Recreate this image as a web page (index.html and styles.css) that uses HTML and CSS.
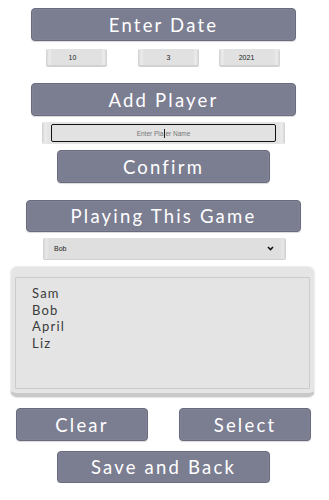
FILE: index.html
```html
<!DOCTYPE html>
<html>
<head>
<meta charset="utf-8">
<link rel="stylesheet" href="styles.css">
</head>
<body>
<div class="page">
  <div class="btn btn-wide first">Enter Date</div>
  <div class="date-row">
    <div class="date d1">10</div>
    <div class="date d2">3</div>
    <div class="date d3">2021</div>
  </div>
  <div class="btn btn-wide add">Add Player</div>
  <div class="input-wrap">
    <div class="name-input"><span class="ph">Enter Pla</span><span class="caret"></span><span class="ph">er Name</span></div>
  </div>
  <div class="btn btn-mid confirm">Confirm</div>
  <div class="btn btn-play">Playing This Game</div>
  <div class="select">
    <span>Bob</span>
    <svg class="chev" width="7" height="5" viewBox="0 0 7 5"><path d="M1 1 L3.5 3.5 L6 1" fill="none" stroke="#111" stroke-width="1.6"/></svg>
  </div>
  <div class="panel">
    <div class="panel-inner">
      <div class="item">Sam</div>
      <div class="item">Bob</div>
      <div class="item">April</div>
      <div class="item">Liz</div>
    </div>
  </div>
  <div class="pair">
    <div class="btn btn-half">Clear</div>
    <div class="btn btn-half">Select</div>
  </div>
  <div class="btn btn-mid save">Save and Back</div>
</div>
</body>
</html>
```
FILE: styles.css
```css
* { box-sizing: border-box; }
html, body { margin: 0; padding: 0; background: #fff; }
.page {
  width: 329px;
  padding-top: 8px;
  display: flex;
  flex-direction: column;
  align-items: flex-start;
}
.btn {
  background: #7b7d91;
  border: 1px solid #696b7d;
  border-radius: 4px;
  box-shadow: 0 1px 1px rgba(0,0,0,0.15), inset 0 0 2px rgba(255,255,255,0.15);
  color: #fff;
  font-family: "Lato", sans-serif;
  font-size: 18.5px;
  letter-spacing: 2.2px;
  display: flex;
  align-items: center;
  justify-content: center;
  height: 33px;
}
.btn-wide { width: 265px; margin-left: 31px; }
.first { margin-bottom: 8px; }
.add { margin-bottom: 6px; }
.btn-mid { width: 213px; margin-left: 57px; }
.confirm { margin-bottom: 17px; }
.btn-play { width: 275px; margin-left: 26px; height: 32px; margin-bottom: 6px; }
.save { height: 32px; }

.date-row { display: flex; height: 18px; margin-bottom: 16px; }
.date {
  width: 61px;
  height: 18px;
  background: linear-gradient(to right, #cfcfcf 0, #ececec 3px, #e1e1e1 6px, #e1e1e1 calc(100% - 6px), #ececec calc(100% - 3px), #cfcfcf 100%);
  border-bottom: 2px solid #d2d2d2;
  border-radius: 2px;
  font-family: "Liberation Sans", Arial, sans-serif;
  font-size: 7px;
  color: #222;
  display: flex;
  align-items: center;
  justify-content: center;
}
.d1 { margin-left: 46px; padding-right: 8px; }
.d2 { margin-left: 31px; }
.d3 { margin-left: 20px; padding-right: 6px; }

.input-wrap {
  width: 243px;
  height: 22px;
  margin-left: 42px;
  margin-bottom: 6px;
  background: linear-gradient(to right, #d0d0d0 0, #ececec 3px, #e4e4e4 6px, #e4e4e4 calc(100% - 6px), #ececec calc(100% - 3px), #d0d0d0 100%);
  border-radius: 2px;
  padding: 2px 0 0 9px;
}
.name-input {
  width: 225px;
  height: 18px;
  border: 1.5px solid #111;
  border-radius: 2px;
  background: #e2e2e2;
  display: flex;
  align-items: center;
  justify-content: center;
  font-family: "Liberation Sans", Arial, sans-serif;
  font-size: 6.5px;
  color: #777;
}
.caret { display: inline-block; width: 1px; height: 9px; background: #222; margin: 0 0.5px; }

.select {
  width: 243px;
  height: 22px;
  margin-left: 43px;
  margin-bottom: 6px;
  background: linear-gradient(to right, #cdcdcd 0, #e9e9e9 3px, #dfdfdf 6px, #dfdfdf calc(100% - 6px), #e9e9e9 calc(100% - 3px), #cdcdcd 100%);
  border-radius: 2px;
  border-bottom: 1px solid #d0d0d0;
  display: flex;
  align-items: center;
  justify-content: space-between;
  padding: 0 12px 0 11px;
  font-family: "Liberation Sans", Arial, sans-serif;
  font-size: 7px;
  color: #222;
}
.chev { display: block; }

.panel {
  width: 305px;
  height: 131px;
  margin-left: 10px;
  margin-bottom: 11px;
  background: #e5e5e5;
  border-radius: 7px;
  border: 1px solid #eeeeee;
  border-bottom: 4px solid #c9c9c9;
  box-shadow: 0 1px 1px rgba(0,0,0,0.1);
  padding: 10px 4px 4px 4px;
}
.panel-inner {
  height: 100%;
  border: 1px solid #cbcbcb;
  border-radius: 1px;
  background: #e4e4e4;
  padding: 7px 0 0 16px;
}
.item {
  font-family: "Lato", sans-serif;
  font-size: 13px;
  line-height: 16.5px;
  letter-spacing: 1.2px;
  color: #3a3a3a;
}

.pair {
  width: 295px;
  margin-left: 16px;
  margin-bottom: 10px;
  display: flex;
  justify-content: space-between;
}
.btn-half { width: 132px; }
```
